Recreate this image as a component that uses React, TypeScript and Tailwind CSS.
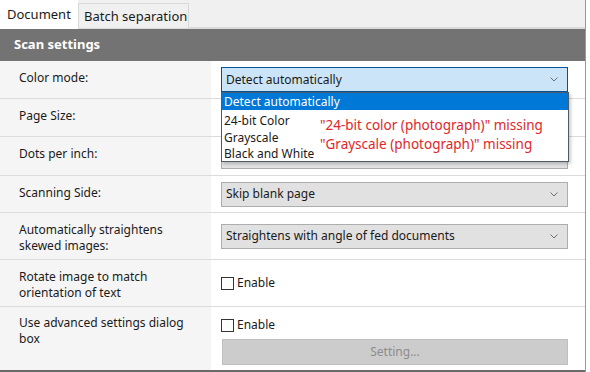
import { ReactNode } from "react";

const Chevron = () => (
  <svg width="8" height="5" viewBox="0 0 8 5" className="shrink-0">
    <path d="M0.5 0.5 L4 4 L7.5 0.5" fill="none" stroke="#707070" strokeWidth="1" />
  </svg>
);

const Combo = ({ value, focused }: { value: string; focused?: boolean }) => (
  <div
    className={
      focused
        ? "flex h-[25px] w-[347px] items-center justify-between border border-[#005499] bg-[#cce4f7] pl-[4px] pr-[9px]"
        : "flex h-[25px] w-[347px] items-center justify-between border border-[#adadad] bg-[#e1e1e1] pl-[4px] pr-[9px]"
    }
  >
    <span className="leading-[16px]">{value}</span>
    <Chevron />
  </div>
);

const Check = ({ label }: { label: string }) => (
  <div className="flex items-center gap-[3px]">
    <div className="h-[13px] w-[13px] border border-[#333333] bg-white" />
    <span className="leading-[16px]">{label}</span>
  </div>
);

interface RowProps {
  label: ReactNode;
  height: string;
  children?: ReactNode;
}

const Row = ({ label, height, children }: RowProps) => (
  <div className={`flex border-b border-[#dcdcdc] ${height}`}>
    <div className="w-[211px] shrink-0 bg-[#f5f5f5] pl-[19px] pt-[9px] leading-[16px]">{label}</div>
    <div className="flex flex-1 items-center pl-[10px]">{children}</div>
  </div>
);

export default function App() {
  return (
    <div className="h-[372px] w-[590px] overflow-hidden bg-white font-['Noto_Sans','Open_Sans',sans-serif] text-[12px] text-[#1a1a1a]">
      <div className="w-[586px] border-r border-[#9a9a9a]">
        <div className="flex h-[29px] bg-[#f0f0f0]">
          <div className="h-full w-[78px] bg-white pl-[7px] pt-[5px] text-[13px] leading-[18px]">Document</div>
          <div className="mt-[3px] h-[26px] w-[111px] border border-[#d9d9d9] bg-[#f0f0f0] pl-[5px] pt-[3px] text-[13px] leading-[18px]">
            Batch separation
          </div>
          <div className="flex-1 border-b-2 border-[#dadada]" />
        </div>
        <div className="flex h-[32px] items-center bg-[#737373] pl-[14px] text-[13px] font-bold text-white">
          Scan settings
        </div>
        <div className="relative">
          <Row label="Color mode:" height="h-[38px]">
            <Combo value="Detect automatically" focused />
          </Row>
          <Row label="Page Size:" height="h-[38px]">
            <Combo value="" />
          </Row>
          <Row label="Dots per inch:" height="h-[39px]">
            <Combo value="" />
          </Row>
          <Row label="Scanning Side:" height="h-[37px]">
            <Combo value="Skip blank page" />
          </Row>
          <Row
            label={
              <>
                Automatically straightens
                <br />
                skewed images:
              </>
            }
            height="h-[47px]"
          >
            <Combo value="Straightens with angle of fed documents" />
          </Row>
          <Row
            label={
              <>
                Rotate image to match
                <br />
                orientation of text
              </>
            }
            height="h-[47px]"
          >
            <Check label="Enable" />
          </Row>
          <div className="flex h-[65px] border-b-2 border-[#6a6a6a]">
            <div className="w-[211px] shrink-0 bg-[#f5f5f5] pl-[19px] pt-[8px] leading-[16px]">
              Use advanced settings dialog
              <br />
              box
            </div>
            <div className="flex flex-1 flex-col pl-[10px] pt-[10px]">
              <Check label="Enable" />
              <div className="ml-[1px] mt-[6px] flex h-[26px] w-[346px] items-center justify-center border border-[#bfbfbf] bg-[#cccccc] text-[#8d8d8d]">
                Setting...
              </div>
            </div>
          </div>

          <div className="absolute left-[221px] top-[31px] h-[70px] w-[348px] border border-[#4f5b66] bg-white shadow-[2px_2px_3px_rgba(0,0,0,0.2)]">
            <div className="h-[17px] bg-[#0078d7] pl-[2px] leading-[17px] text-white">Detect automatically</div>
            <div className="mt-[2px] pl-[2px] leading-[17px]">24-bit Color</div>
            <div className="pl-[2px] leading-[17px]">Grayscale</div>
            <div className="pl-[2px] leading-[16px]">Black and White</div>
            <div className="absolute left-[98px] top-[23px] text-[13.5px] leading-[19px] text-[#e0272b]">
              <div>"24-bit color (photograph)" missing</div>
              <div>"Grayscale (photograph)" missing</div>
            </div>
          </div>
        </div>
      </div>
    </div>
  );
}
